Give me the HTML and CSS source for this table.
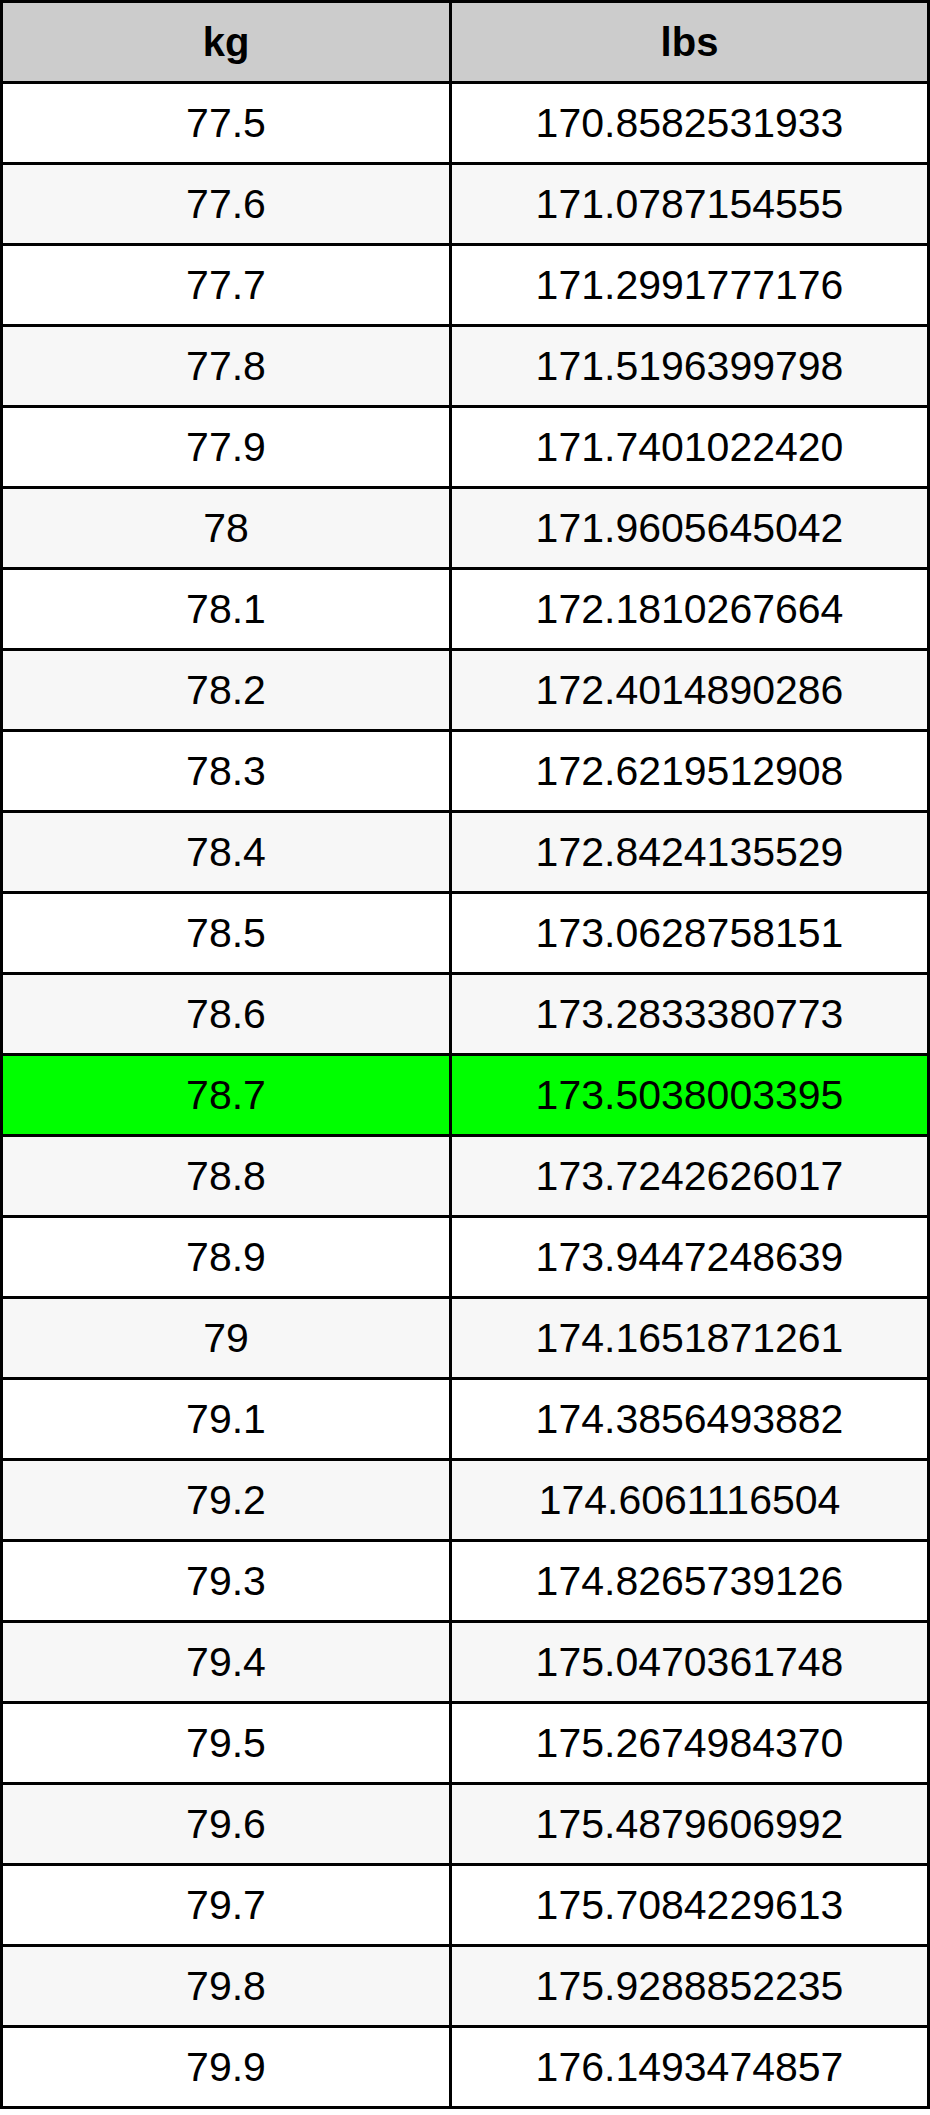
FILE: index.html
```html
<!DOCTYPE html>
<html lang="en">
<head>
<meta charset="utf-8">
<title>kg to lbs</title>
<link rel="stylesheet" href="styles.css">
</head>
<body>
<table class="conv">
  <thead>
    <tr><th class="c1">kg</th><th class="c2">lbs</th></tr>
  </thead>
  <tbody>
    <tr><td>77.5</td><td>170.8582531933</td></tr>
    <tr><td>77.6</td><td>171.0787154555</td></tr>
    <tr><td>77.7</td><td>171.2991777176</td></tr>
    <tr><td>77.8</td><td>171.5196399798</td></tr>
    <tr><td>77.9</td><td>171.7401022420</td></tr>
    <tr><td>78</td><td>171.9605645042</td></tr>
    <tr><td>78.1</td><td>172.1810267664</td></tr>
    <tr><td>78.2</td><td>172.4014890286</td></tr>
    <tr><td>78.3</td><td>172.6219512908</td></tr>
    <tr><td>78.4</td><td>172.8424135529</td></tr>
    <tr><td>78.5</td><td>173.0628758151</td></tr>
    <tr><td>78.6</td><td>173.2833380773</td></tr>
    <tr class="hl"><td>78.7</td><td>173.5038003395</td></tr>
    <tr><td>78.8</td><td>173.7242626017</td></tr>
    <tr><td>78.9</td><td>173.9447248639</td></tr>
    <tr><td>79</td><td>174.1651871261</td></tr>
    <tr><td>79.1</td><td>174.3856493882</td></tr>
    <tr><td>79.2</td><td>174.6061116504</td></tr>
    <tr><td>79.3</td><td>174.8265739126</td></tr>
    <tr><td>79.4</td><td>175.0470361748</td></tr>
    <tr><td>79.5</td><td>175.2674984370</td></tr>
    <tr><td>79.6</td><td>175.4879606992</td></tr>
    <tr><td>79.7</td><td>175.7084229613</td></tr>
    <tr><td>79.8</td><td>175.9288852235</td></tr>
    <tr><td>79.9</td><td>176.1493474857</td></tr>
  </tbody>
</table>
</body>
</html>
```

FILE: styles.css
```css
html, body {
  margin: 0;
  padding: 0;
  background: #ffffff;
}

.conv {
  width: 930px;
  table-layout: fixed;
  border-collapse: separate;
  border-spacing: 0;
  border-top: 3px solid #000;
  border-left: 3px solid #000;
  font-family: "Liberation Sans", Arial, sans-serif;
  color: #000;
}

.conv th,
.conv td {
  height: 78px;
  padding: 0;
  text-align: center;
  vertical-align: middle;
  border-right: 3px solid #000;
  border-bottom: 3px solid #000;
  font-size: 41px;
  line-height: 1;
}

.conv th {
  background: #cccccc;
  font-weight: bold;
  font-size: 40px;
}

.conv .c1 {
  width: 446px;
}

.conv .c2 {
  width: 475px;
}

.conv tbody tr:nth-child(odd) td {
  background: #ffffff;
}

.conv tbody tr:nth-child(even) td {
  background: #f7f7f7;
}

.conv tbody tr.hl td {
  background: #00ff00;
}
```
